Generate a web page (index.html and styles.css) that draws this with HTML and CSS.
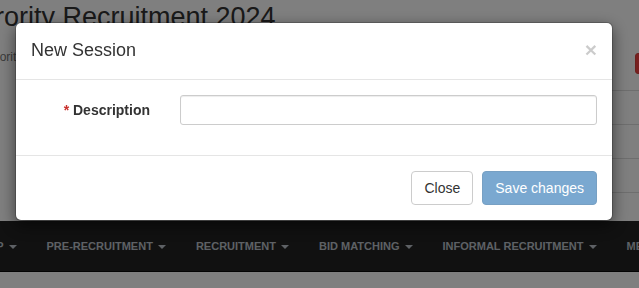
FILE: index.html
```html
<!DOCTYPE html>
<html>
<head>
<meta charset="utf-8">
<title>New Session</title>
<link rel="stylesheet" href="styles.css">
</head>
<body>
<div class="page">
  <main class="main">
    <h1 class="page-title">Sorority Recruitment 2024</h1>
    <div class="sub-row">
      <p class="subtitle">Sorority recruitment sessions</p>
      <button class="btn-danger">Delete</button>
    </div>
    <div class="table">
      <div class="trow"></div>
      <div class="trow"></div>
      <div class="trow"></div>
      <div class="trow"></div>
    </div>
  </main>
  <nav class="navbar">
    <ul class="nav">
      <li><a>SETUP <span class="caret"></span></a></li>
      <li><a>PRE-RECRUITMENT <span class="caret"></span></a></li>
      <li><a>RECRUITMENT <span class="caret"></span></a></li>
      <li><a>BID MATCHING <span class="caret"></span></a></li>
      <li><a>INFORMAL RECRUITMENT <span class="caret"></span></a></li>
      <li><a>MEMBERS <span class="caret"></span></a></li>
    </ul>
  </nav>
</div>

<div class="backdrop"></div>

<div class="modal">
  <div class="modal-header">
    <h4 class="modal-title">New Session</h4>
    <button class="close" aria-label="Close">×</button>
  </div>
  <div class="modal-body">
    <div class="form-group">
      <label class="control-label"><span class="req">*</span> Description</label>
      <input class="form-control" type="text">
    </div>
  </div>
  <div class="modal-footer">
    <button class="btn btn-default">Close</button>
    <button class="btn btn-primary" disabled>Save changes</button>
  </div>
</div>
</body>
</html>
```

FILE: styles.css
```css
html, body {
  margin: 0;
  padding: 0;
  background: #fff;
  overflow: hidden;
  height: 288px;
  font-family: "Liberation Sans", Arial, Helvetica, sans-serif;
  font-size: 14px;
  color: #333;
}

.page {
  width: 639px;
}

.main {
  height: 221px;
  overflow: hidden;
}

.page-title {
  margin: 0;
  padding-top: 2px;
  font-size: 27px;
  font-weight: normal;
  line-height: 30px;
  color: #333;
  text-indent: -38px;
  white-space: nowrap;
}

.sub-row {
  display: flex;
  justify-content: space-between;
  align-items: flex-start;
  margin-top: 16px;
  height: 26px;
}

.subtitle {
  margin: 0;
  font-size: 12px;
  line-height: 18px;
  color: #777;
  text-indent: -19px;
  white-space: nowrap;
}

.btn-danger {
  width: 50px;
  height: 21px;
  margin-top: 5px;
  margin-right: -46px;
  border: 1px solid #d43f3a;
  border-radius: 3px;
  background: #f04040;
  color: #fff;
  font-size: 12px;
  padding: 0;
  flex: none;
}

.table {
  margin-top: 16px;
  margin-left: 300px;
}

.trow {
  height: 33px;
  border-top: 1px solid #ddd;
}

.navbar {
  height: 50px;
  background: #222;
  border-bottom: 1px solid #080808;
  overflow: hidden;
}

.nav {
  display: flex;
  margin: 0 0 0 -48px;
  padding: 0;
  list-style: none;
  white-space: nowrap;
}

.nav a {
  display: block;
  padding: 0 15px;
  line-height: 50px;
  font-size: 11px;
  font-weight: bold;
  color: #bcc2ca;
}

.caret {
  display: inline-block;
  width: 0;
  height: 0;
  margin-left: 2px;
  vertical-align: middle;
  border-top: 4px solid;
  border-left: 4px solid transparent;
  border-right: 4px solid transparent;
}

.backdrop {
  position: fixed;
  inset: 0;
  background: rgba(0, 0, 0, 0.5);
  z-index: 10;
}

.modal {
  position: fixed;
  top: 22px;
  left: 15px;
  width: 596px;
  background: #fff;
  border: 1px solid rgba(0, 0, 0, 0.2);
  border-radius: 6px;
  box-shadow: 0 5px 15px rgba(0, 0, 0, 0.5);
  z-index: 20;
  background-clip: padding-box;
}

.modal-header {
  display: flex;
  justify-content: space-between;
  align-items: flex-start;
  padding: 15px;
  border-bottom: 1px solid #e5e5e5;
}

.modal-title {
  margin: 0;
  font-size: 18px;
  font-weight: normal;
  line-height: 25.7px;
  color: #333;
}

.close {
  margin-top: 1px;
  padding: 0;
  border: 0;
  background: transparent;
  font-family: "Liberation Sans", Arial, sans-serif;
  font-size: 21px;
  font-weight: bold;
  line-height: 1;
  color: #000;
  opacity: 0.2;
}

.modal-body {
  padding: 15px;
}

.form-group {
  display: grid;
  grid-template-columns: 134px 1fr;
  column-gap: 15px;
  align-items: center;
  margin-bottom: 15px;
}

.control-label {
  padding-right: 15px;
  text-align: right;
  font-weight: bold;
  font-size: 14px;
  color: #333;
}

.req {
  color: #c9302c;
}

.form-control {
  box-sizing: border-box;
  width: 100%;
  height: 30px;
  margin: 0;
  padding: 5px 10px;
  border: 1px solid #ccc;
  border-radius: 3px;
  box-shadow: inset 0 1px 1px rgba(0, 0, 0, 0.075);
  font-family: inherit;
  font-size: 12px;
}

.modal-footer {
  display: flex;
  justify-content: flex-end;
  gap: 9px;
  padding: 15px;
  border-top: 1px solid #e5e5e5;
}

.btn {
  box-sizing: border-box;
  height: 34px;
  padding: 6px 12px;
  border: 1px solid transparent;
  border-radius: 4px;
  font-family: inherit;
  font-size: 14px;
  line-height: 20px;
}

.btn-default {
  background: #fff;
  border-color: #ccc;
  color: #333;
}

.btn-primary {
  background: #337ab7;
  border-color: #2e6da4;
  color: #fff;
  opacity: 0.65;
}
```
